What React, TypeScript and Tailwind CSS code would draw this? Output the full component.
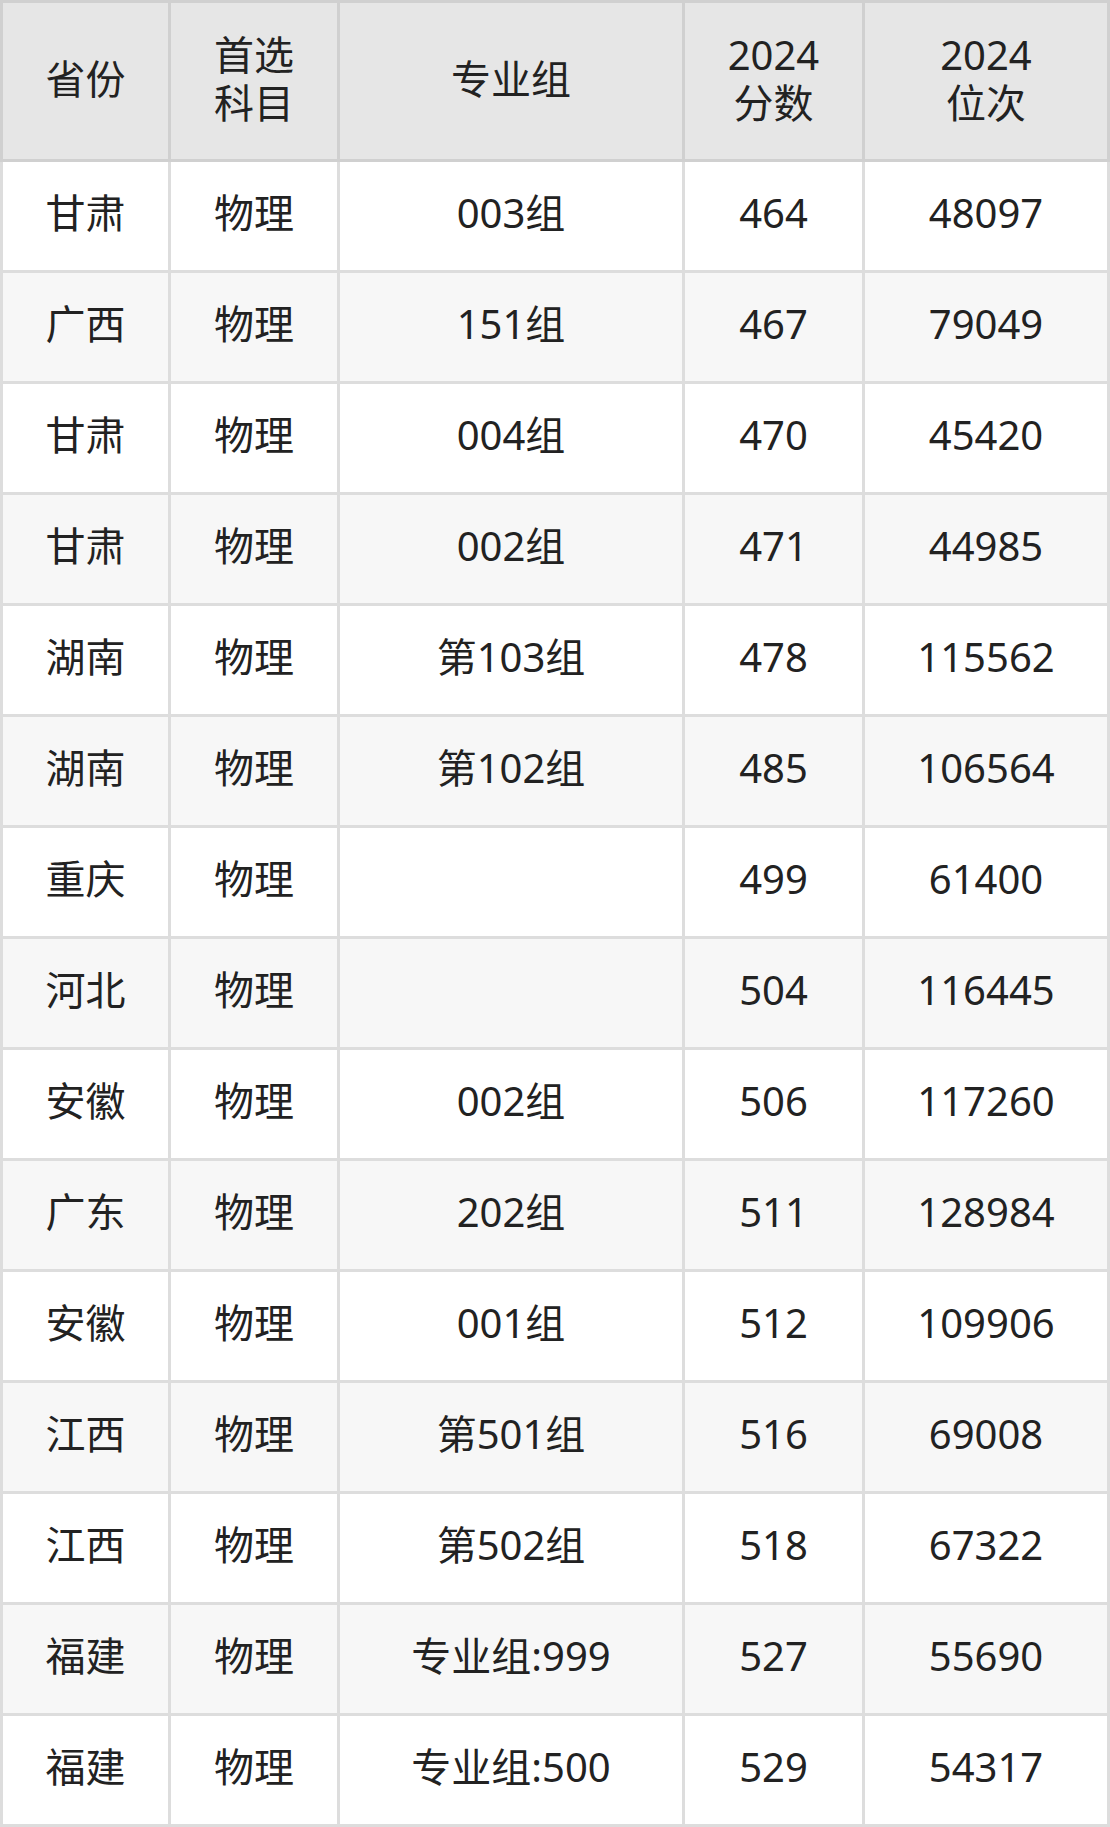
const rows: [string, string, string, string, string][] = [
  ["甘肃", "物理", "003组", "464", "48097"],
  ["广西", "物理", "151组", "467", "79049"],
  ["甘肃", "物理", "004组", "470", "45420"],
  ["甘肃", "物理", "002组", "471", "44985"],
  ["湖南", "物理", "第103组", "478", "115562"],
  ["湖南", "物理", "第102组", "485", "106564"],
  ["重庆", "物理", "", "499", "61400"],
  ["河北", "物理", "", "504", "116445"],
  ["安徽", "物理", "002组", "506", "117260"],
  ["广东", "物理", "202组", "511", "128984"],
  ["安徽", "物理", "001组", "512", "109906"],
  ["江西", "物理", "第501组", "516", "69008"],
  ["江西", "物理", "第502组", "518", "67322"],
  ["福建", "物理", "专业组:999", "527", "55690"],
  ["福建", "物理", "专业组:500", "529", "54317"],
];

const headers = [["省份"], ["首选", "科目"], ["专业组"], ["2024", "分数"], ["2024", "位次"]];

const cols = "grid grid-cols-[165px_166px_342px_177px_242px] gap-[3px]";

export default function App() {
  return (
    <div
      className="w-[1110px] text-[40px] leading-[48px] text-[#222222]"
      style={{ fontFamily: '"Noto Sans", "Noto Sans CJK SC", sans-serif' }}
    >
      <div className={`${cols} bg-[#d0d0d0] p-[3px]`}>
        {headers.map((h, i) => (
          <div key={i} className="flex h-[156px] flex-col items-center justify-center bg-[#e6e6e6] pb-[4px]">
            {h.map((line) => (
              <span key={line}>{line}</span>
            ))}
          </div>
        ))}
      </div>
      <div className="flex flex-col gap-[3px] bg-[#dddddd] px-[3px] pb-[3px]">
        {rows.map((r, i) => (
          <div key={i} className={cols}>
            {r.map((c, j) => (
              <div
                key={j}
                className={`flex h-[108px] items-center justify-center pb-[6px] ${i % 2 === 0 ? "bg-white" : "bg-[#f7f7f7]"}`}
              >
                {c}
              </div>
            ))}
          </div>
        ))}
      </div>
    </div>
  );
}
